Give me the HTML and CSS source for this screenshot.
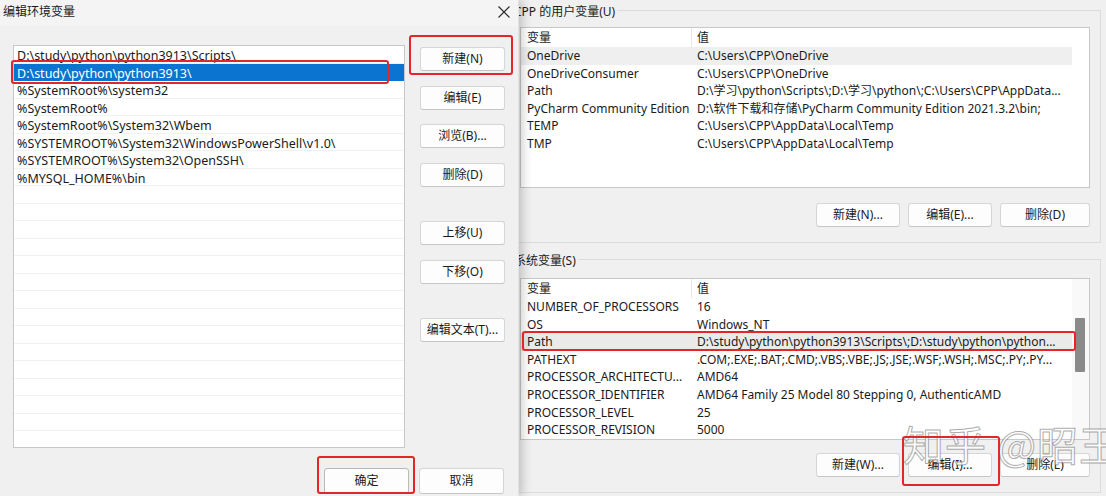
FILE: index.html
```html
<!DOCTYPE html>
<html lang="zh-CN">
<head>
<meta charset="utf-8">
<title>编辑环境变量</title>
<link rel="stylesheet" href="styles.css">
</head>
<body>
<div class="screen">
  <section class="dialog">
    <header class="titlebar">
      <span class="title">编辑环境变量</span>
      <svg class="close" width="12" height="12" viewBox="0 0 12 12"><path d="M0.5 0.5 L11.5 11.5 M11.5 0.5 L0.5 11.5" stroke="#2b2b2b" stroke-width="1.1" fill="none"/></svg>
    </header>
    <div class="dialog-main">
      <div class="path-list">
        <div class="prow">D:\study\python\python3913\Scripts\</div>
        <div class="prow sel">D:\study\python\python3913\</div>
        <div class="prow">%SystemRoot%\system32</div>
        <div class="prow">%SystemRoot%</div>
        <div class="prow">%SystemRoot%\System32\Wbem</div>
        <div class="prow">%SYSTEMROOT%\System32\WindowsPowerShell\v1.0\</div>
        <div class="prow">%SYSTEMROOT%\System32\OpenSSH\</div>
        <div class="prow">%MYSQL_HOME%\bin</div>
        <div class="prow"></div><div class="prow"></div><div class="prow"></div>
        <div class="prow"></div><div class="prow"></div><div class="prow"></div>
        <div class="prow"></div><div class="prow"></div><div class="prow"></div>
        <div class="prow"></div><div class="prow"></div><div class="prow"></div>
        <div class="prow"></div><div class="prow"></div><div class="prow"></div>
      </div>
      <div class="side">
        <button class="btn">新建(N)</button>
        <button class="btn">编辑(E)</button>
        <button class="btn">浏览(B)...</button>
        <button class="btn">删除(D)</button>
        <button class="btn spaced">上移(U)</button>
        <button class="btn">下移(O)</button>
        <button class="btn spaced">编辑文本(T)...</button>
      </div>
    </div>
    <footer class="dialog-foot">
      <button class="btn foot default">确定</button>
      <button class="btn foot">取消</button>
    </footer>
  </section>

  <section class="envwin">
    <div class="group">
      <div class="group-label">CPP 的用户变量(U)</div>
      <div class="lv user-lv">
        <div class="lv-cols">
          <div class="lv-head"><span class="c1">变量</span><span class="c2">值</span></div>
          <div class="lv-row hl"><span class="c1">OneDrive</span><span class="c2">C:\Users\CPP\OneDrive</span></div>
          <div class="lv-row"><span class="c1">OneDriveConsumer</span><span class="c2">C:\Users\CPP\OneDrive</span></div>
          <div class="lv-row"><span class="c1">Path</span><span class="c2">D:\学习\python\Scripts\;D:\学习\python\;C:\Users\CPP\AppData...</span></div>
          <div class="lv-row"><span class="c1">PyCharm Community Edition</span><span class="c2">D:\软件下载和存储\PyCharm Community Edition 2021.3.2\bin;</span></div>
          <div class="lv-row"><span class="c1">TEMP</span><span class="c2">C:\Users\CPP\AppData\Local\Temp</span></div>
          <div class="lv-row"><span class="c1">TMP</span><span class="c2">C:\Users\CPP\AppData\Local\Temp</span></div>
        </div>
      </div>
      <div class="btn-row">
        <button class="btn wbtn">新建(N)...</button>
        <button class="btn wbtn">编辑(E)...</button>
        <button class="btn wbtn last">删除(D)</button>
      </div>
    </div>

    <div class="group sys">
      <div class="group-label">系统变量(S)</div>
      <div class="lv sys-lv">
        <div class="lv-cols">
          <div class="lv-head"><span class="c1">变量</span><span class="c2">值</span></div>
          <div class="lv-row"><span class="c1">NUMBER_OF_PROCESSORS</span><span class="c2">16</span></div>
          <div class="lv-row"><span class="c1">OS</span><span class="c2">Windows_NT</span></div>
          <div class="lv-row hl2"><span class="c1">Path</span><span class="c2">D:\study\python\python3913\Scripts\;D:\study\python\python...</span></div>
          <div class="lv-row"><span class="c1">PATHEXT</span><span class="c2">.COM;.EXE;.BAT;.CMD;.VBS;.VBE;.JS;.JSE;.WSF;.WSH;.MSC;.PY;.PY...</span></div>
          <div class="lv-row"><span class="c1">PROCESSOR_ARCHITECTU...</span><span class="c2">AMD64</span></div>
          <div class="lv-row"><span class="c1">PROCESSOR_IDENTIFIER</span><span class="c2">AMD64 Family 25 Model 80 Stepping 0, AuthenticAMD</span></div>
          <div class="lv-row"><span class="c1">PROCESSOR_LEVEL</span><span class="c2">25</span></div>
          <div class="lv-row"><span class="c1">PROCESSOR_REVISION</span><span class="c2">5000</span></div>
        </div>
        <div class="scrollbar"><div class="thumb"></div></div>
      </div>
      <div class="btn-row sys-btns">
        <button class="btn wbtn">新建(W)...</button>
        <button class="btn wbtn">编辑(I)...</button>
        <button class="btn wbtn last">删除(L)</button>
      </div>
    </div>

    <div class="watermark">知乎 @昭王</div>
  </section>

  <span class="mark mark-new"></span>
  <span class="mark mark-sel"></span>
  <span class="mark mark-ok"></span>
  <span class="mark mark-path"></span>
  <span class="mark mark-edit"></span>
</div>
</body>
</html>
```

FILE: styles.css
```css
* { box-sizing: border-box; }
html, body { margin: 0; padding: 0; }
body {
  width: 1106px;
  height: 496px;
  overflow: hidden;
  background: #f0f0f0;
  font-family: "Noto Sans", "Noto Sans CJK SC", sans-serif;
  font-size: 12px;
  color: #1b1b1b;
}
.screen {
  position: relative;
  display: flex;
  width: 1106px;
  height: 496px;
  overflow: hidden;
}

/* ---------- left dialog ---------- */
.dialog {
  position: relative;
  z-index: 2;
  flex: none;
  width: 519px;
  height: 496px;
  background: #f0f0f0;
  border-right: 1px solid #e2e2e2;
  box-shadow: 3px 0 10px rgba(0, 0, 0, 0.22);
  display: flex;
  flex-direction: column;
}
.titlebar {
  height: 26px;
  flex: none;
  background: #f4f4f4;
  display: flex;
  align-items: center;
  justify-content: space-between;
  padding: 0 8px 2px 3px;
}
.title { line-height: 14px; font-size: 12px; color: #1a1a1a; }
.close { display: block; }

.dialog-main {
  display: flex;
  padding: 19px 0 0 13px;
}
.path-list {
  width: 392px;
  height: 403px;
  background: #fff;
  border: 1px solid #c8c8c8;
  overflow: hidden;
}
.prow {
  height: 17.5px;
  line-height: 19px;
  padding-left: 3px;
  font-size: 12.5px;
  border-bottom: 1px solid #f2f2f2;
  white-space: nowrap;
}
.prow.sel { background: #0a74d0; color: #fff; border-bottom-color: #0a74d0; }

.side {
  margin-left: 15px;
  padding-top: 2px;
  width: 85px;
  display: flex;
  flex-direction: column;
}
.btn {
  height: 24px;
  width: 85px;
  padding: 0;
  background: #fdfdfd;
  border: 1px solid #d6d6d6;
  border-bottom-color: #c6c6c6;
  border-radius: 3px;
  font-family: inherit;
  font-size: 12px;
  color: #1b1b1b;
  line-height: 20px;
}
.side .btn { margin-bottom: 14.5px; }
.side .btn.spaced { margin-top: 20px; }

.dialog-foot {
  margin-top: 20px;
  display: flex;
  justify-content: flex-end;
  gap: 10px;
  padding-right: 14px;
}
.btn.foot { height: 26px; }
.btn.default { border-color: #b9b9b9; }

/* ---------- right window ---------- */
.envwin {
  position: relative;
  flex: 1;
  height: 496px;
  background: #f0f0f0;
  padding-top: 10px;
  overflow: hidden;
}
.group {
  margin: 0 5px 0 -11px;
  border: 1px solid #dcdcdc;
  padding: 0 10px 15px 11px;
}
.group.sys { margin-top: 16px; }
.group-label {
  width: fit-content;
  margin: -6px 0 0 -6px;
  padding: 0 2px 0 0;
  background: #f0f0f0;
  line-height: 14px;
  white-space: nowrap;
}
.lv {
  margin-top: 8px;
  height: 161px;
  background: #fff;
  border: 1px solid #c8c8c8;
  display: flex;
  overflow: hidden;
}
.sys-lv { margin-top: 10px; height: 162px; }
.lv-cols { width: 551px; flex: none; }
.lv-head, .lv-row {
  display: flex;
  white-space: nowrap;
}
.lv-head { height: 19px; line-height: 19px; }
.lv-row { height: 17.6px; line-height: 18px; }
.c1 { width: 171px; flex: none; padding-left: 6px; overflow: hidden; }
.c2 { width: 380px; flex: none; padding-left: 5px; overflow: hidden; }
.lv-head .c1 { border-right: 1px solid #e8e8e8; }
.lv-row.hl { background: #efefef; }
.lv-row.hl2 { background: #eaeaea; }

.scrollbar {
  width: 18px;
  flex: none;
  background: #f9f9f9;
  padding: 39px 5px 0 3px;
}
.thumb { height: 54px; background: #8a8a8a; border-radius: 1px; }

.btn-row {
  margin-top: 15px;
  display: flex;
  justify-content: flex-end;
  gap: 8px;
}
.sys-btns { margin-top: 13px; }
.btn.wbtn { width: 84px; }
.btn.wbtn.last { width: 90px; }

.watermark {
  position: absolute;
  left: 384px;
  top: 418px;
  font-family: "Noto Sans CJK SC", sans-serif;
  font-size: 41px;
  line-height: 50px;
  white-space: nowrap;
  color: rgba(255, 255, 255, 0.8);
  -webkit-text-stroke: 1px rgba(90, 90, 90, 0.5);
  letter-spacing: 1px;
}

/* ---------- red annotation boxes ---------- */
.mark {
  position: absolute;
  z-index: 5;
  border: 2.5px solid #e4262b;
  border-radius: 3px;
  pointer-events: none;
}
.mark-new  { left: 409px; top: 35px;  width: 104px; height: 40px; }
.mark-sel  { left: 11px;  top: 60px;  width: 378px; height: 24px; }
.mark-ok   { left: 317px; top: 456px; width: 98px;  height: 38px; }
.mark-path { left: 522px; top: 331px; width: 554px; height: 20px; }
.mark-edit { left: 902px; top: 436px; width: 98px;  height: 50px; }
```
